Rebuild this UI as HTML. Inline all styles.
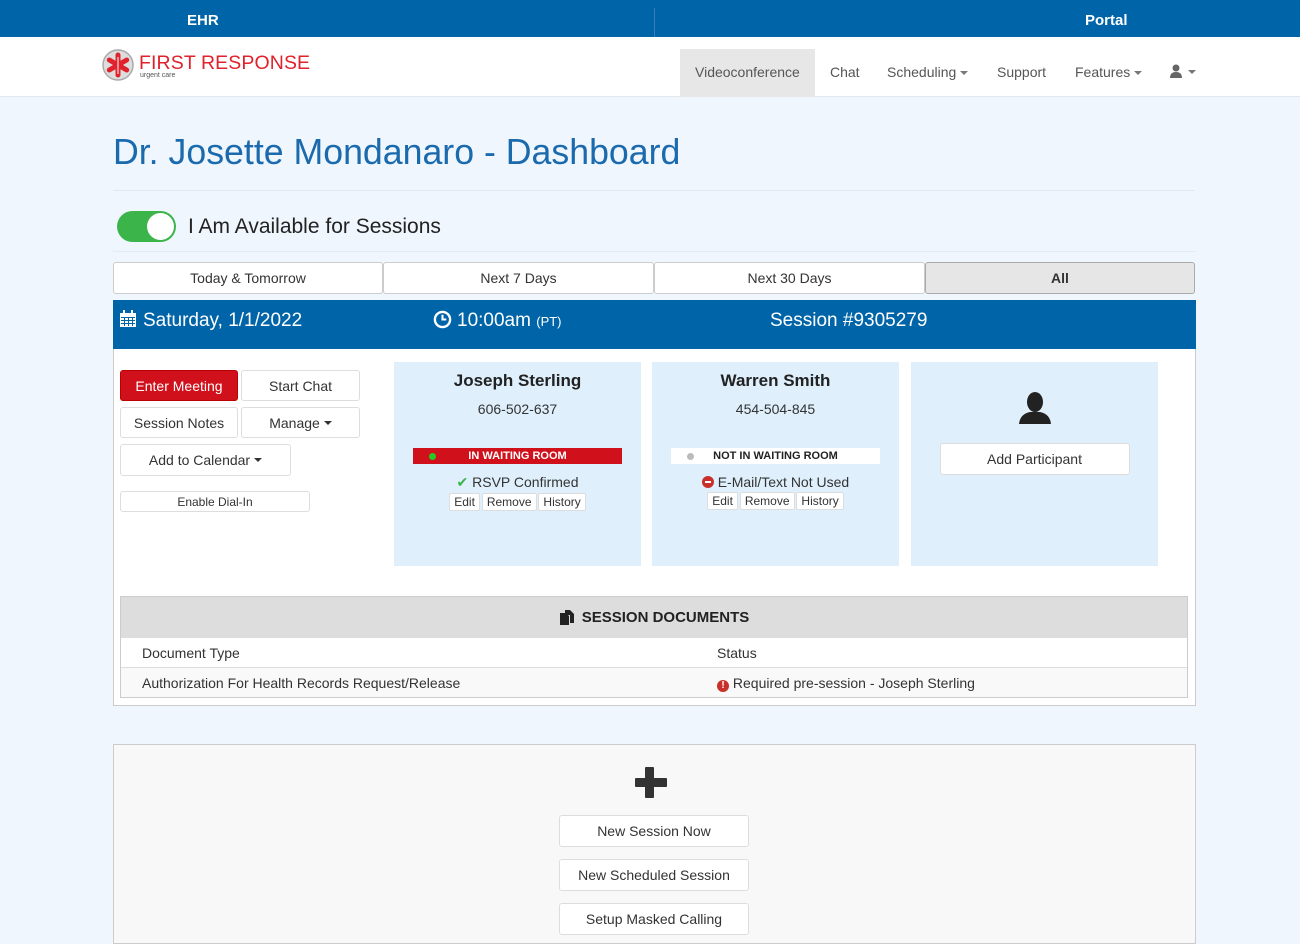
<!DOCTYPE html>
<html><head><meta charset="utf-8"><style>
*{box-sizing:border-box;margin:0;padding:0}
body{width:1300px;height:930px;overflow:hidden;background:#eff6fd;font-family:"Liberation Sans",sans-serif;color:#333;position:relative;font-size:14px}
.a{position:absolute}
.btn{position:absolute;background:#fff;border:1px solid #ddd;border-radius:3px;text-align:center;color:#333}
.c{display:flex;align-items:center;justify-content:center}
.car{display:inline-block;border-left:4px solid transparent;border-right:4px solid transparent;border-top:4px solid #333;vertical-align:middle;margin-left:4px}
.card{position:absolute;background:#dff0fc;top:362px;width:247px;height:204px;text-align:center}
.sm{display:inline-block;background:#fff;border:1px solid #ddd;border-radius:2px;padding:1px 4px;font-size:12px;margin:0 -1px}
</style></head><body>
<div class="a" style="left:0;top:0;width:1300px;height:37px;background:#0064a8"></div>
<div class="a" style="left:654px;top:8px;width:1px;height:29px;background:#3a7fb8"></div>
<div class="a" style="left:187px;top:12px;color:#fff;font-weight:bold;font-size:15px">EHR</div>
<div class="a" style="left:1085px;top:12px;color:#fff;font-weight:bold;font-size:15px">Portal</div>
<div class="a" style="left:0;top:37px;width:1300px;height:60px;background:#fff;border-bottom:1px solid #e3e8ee"></div>
<svg class="a" style="left:102px;top:49px" width="32" height="32" viewBox="0 0 32 32"><circle cx="16" cy="16" r="15" fill="#ddd" stroke="#aaa" stroke-width="1.5"/><g stroke="#e0222c" stroke-width="5" stroke-linecap="round"><line x1="16" y1="6" x2="16" y2="26"/><line x1="7.3" y1="11" x2="24.7" y2="21"/><line x1="7.3" y1="21" x2="24.7" y2="11"/></g><line x1="16" y1="8" x2="16" y2="25" stroke="#fff" stroke-width="1"/></svg>
<div class="a" style="left:139px;top:52px;color:#e0222c;font-size:19.5px;letter-spacing:0.1px">FIRST RESPONSE</div>
<div class="a" style="left:140px;top:72px;color:#555;font-size:7px">urgent care</div>
<div class="a" style="left:680px;top:49px;width:135px;height:48px;background:#e7e7e7"></div>
<div class="a" style="left:695px;top:64px;color:#555">Videoconference</div>
<div class="a" style="left:830px;top:64px;color:#555">Chat</div>
<div class="a" style="left:887px;top:64px;color:#555">Scheduling<span class="car" style="border-top-color:#777"></span></div>
<div class="a" style="left:997px;top:64px;color:#555">Support</div>
<div class="a" style="left:1075px;top:64px;color:#555">Features<span class="car" style="border-top-color:#777"></span></div>
<svg class="a" style="left:1169px;top:64px" width="14" height="14" viewBox="0 0 14 14"><circle cx="7" cy="4" r="3.5" fill="#666"/><path d="M1 14 Q1 8 7 8 Q13 8 13 14Z" fill="#666"/></svg>
<span class="a car" style="left:1184px;top:70px;border-top-color:#777"></span>
<div class="a" style="left:113px;top:132px;color:#1a6aad;font-size:35.7px">Dr. Josette Mondanaro - Dashboard</div>
<div class="a" style="left:113px;top:190px;width:1082px;height:1px;background:#e1e8ef"></div>
<div class="a" style="left:117px;top:211px;width:59px;height:31px;border-radius:16px;background:#3bb54a"></div>
<div class="a" style="left:147px;top:213px;width:27px;height:27px;border-radius:50%;background:#fff"></div>
<div class="a" style="left:188px;top:215px;font-size:21px;color:#222">I Am Available for Sessions</div>
<div class="a" style="left:113px;top:251px;width:1082px;height:1px;background:#e6ebf0"></div>
<div class="btn c" style="left:113px;top:262px;width:270px;height:32px;border-color:#ccc">Today &amp; Tomorrow</div>
<div class="btn c" style="left:383px;top:262px;width:271px;height:32px;border-color:#ccc">Next 7 Days</div>
<div class="btn c" style="left:654px;top:262px;width:271px;height:32px;border-color:#ccc">Next 30 Days</div>
<div class="btn c" style="left:925px;top:262px;width:270px;height:32px;border-color:#aaa;background:#e6e6e6;font-weight:bold">All</div>
<div class="a" style="left:113px;top:300px;width:1083px;height:406px;background:#fff;border:1px solid #ccc"></div>
<div class="a" style="left:113px;top:300px;width:1083px;height:49px;background:#0064a8"></div>
<svg class="a" style="left:119px;top:310px" width="18" height="18" viewBox="0 0 18 18"><rect x="1" y="3" width="16" height="14" fill="#fff"/><rect x="4" y="0" width="2" height="4" fill="#fff"/><rect x="12" y="0" width="2" height="4" fill="#fff"/><g fill="#0064a8"><rect x="2" y="7" width="14" height="1"/><rect x="2" y="10" width="14" height="1"/><rect x="2" y="13" width="14" height="1"/><rect x="5" y="7" width="1" height="9"/><rect x="9" y="7" width="1" height="9"/><rect x="13" y="7" width="1" height="9"/></g></svg>
<div class="a" style="left:143px;top:310px;color:#fff;font-size:19px">Saturday, 1/1/2022</div>
<svg class="a" style="left:433px;top:310px" width="19" height="19" viewBox="0 0 20 20"><circle cx="10" cy="10" r="8" fill="none" stroke="#fff" stroke-width="2.5"/><path d="M10 5v5h4" fill="none" stroke="#fff" stroke-width="2.2"/></svg>
<div class="a" style="left:457px;top:310px;color:#fff;font-size:19px">10:00am <span style="font-size:13px">(PT)</span></div>
<div class="a" style="left:770px;top:310px;color:#fff;font-size:19px">Session #9305279</div>
<div class="btn c" style="left:120px;top:370px;width:118px;height:31px;background:#d0111b;border-color:#b00;color:#fff">Enter Meeting</div>
<div class="btn c" style="left:241px;top:370px;width:119px;height:31px">Start Chat</div>
<div class="btn c" style="left:120px;top:407px;width:118px;height:31px">Session Notes</div>
<div class="btn c" style="left:241px;top:407px;width:119px;height:31px">Manage<span class="car"></span></div>
<div class="btn c" style="left:120px;top:444px;width:171px;height:32px">Add to Calendar<span class="car"></span></div>
<div class="btn c" style="left:120px;top:491px;width:190px;height:21px;font-size:12px">Enable Dial-In</div>
<div class="card" style="left:394px">
<div style="margin-top:9px;font-weight:bold;font-size:17px;color:#222">Joseph Sterling</div>
<div style="margin-top:10px">606-502-637</div>
<div style="position:relative;margin:31px auto 0;width:209px;height:16px;background:#d0111b;color:#fff;font-size:11px;font-weight:bold;line-height:16px">IN WAITING ROOM<span style="position:absolute;left:16px;top:5px;width:7px;height:7px;border-radius:50%;background:#2c2"></span></div>
<div style="margin-top:10px"><span style="color:#3bb54a">✔</span> RSVP Confirmed</div>
<div style="margin-top:2px"><span class="sm">Edit</span> <span class="sm">Remove</span> <span class="sm">History</span></div>
</div>
<div class="card" style="left:652px">
<div style="margin-top:9px;font-weight:bold;font-size:17px;color:#222">Warren Smith</div>
<div style="margin-top:10px">454-504-845</div>
<div style="position:relative;margin:31px auto 0;width:209px;height:16px;background:#fff;color:#222;font-size:11px;font-weight:bold;line-height:16px">NOT IN WAITING ROOM<span style="position:absolute;left:16px;top:5px;width:7px;height:7px;border-radius:50%;background:#bbb"></span></div>
<div style="margin-top:10px"><span style="display:inline-block;width:12px;height:12px;border-radius:50%;background:#c9302c;position:relative;vertical-align:-1px"><span style="position:absolute;left:3px;top:5px;width:6px;height:2px;background:#fff"></span></span> E-Mail/Text Not Used</div>
<div style="margin-top:2px"><span class="sm">Edit</span> <span class="sm">Remove</span> <span class="sm">History</span></div>
</div>
<div class="card" style="left:911px">
<svg style="margin-top:28px" width="36" height="36" viewBox="0 0 36 36"><ellipse cx="18" cy="12" rx="8" ry="10" fill="#222"/><path d="M2 34 Q3 24 13 22 L23 22 Q33 24 34 34Z" fill="#222"/></svg>
<div class="btn c" style="position:relative;margin:14px auto 0;width:190px;height:32px;top:0;left:0">Add Participant</div>
</div>
<div class="a" style="left:120px;top:596px;width:1068px;height:102px;border:1px solid #ccc"></div>
<div class="a c" style="left:121px;top:597px;width:1066px;height:41px;background:#ddd;font-weight:bold;font-size:15px;color:#222"><svg width="16" height="16" viewBox="0 0 16 16" style="margin-right:7px"><path d="M1 3h6l3 3v9H1z" fill="#222"/><path d="M6 0h5l4 4v9h-4V5H6z" fill="#222"/></svg>SESSION DOCUMENTS</div>
<div class="a" style="left:121px;top:638px;width:1066px;height:30px;background:#fff;border-bottom:1px solid #ddd"></div>
<div class="a" style="left:142px;top:645px">Document Type</div>
<div class="a" style="left:717px;top:645px">Status</div>
<div class="a" style="left:121px;top:668px;width:1066px;height:29px;background:#f9f9f9"></div>
<div class="a" style="left:142px;top:675px">Authorization For Health Records Request/Release</div>
<div class="a" style="left:717px;top:675px"><span style="display:inline-block;width:12px;height:12px;border-radius:50%;background:#c9302c;color:#fff;font-size:10px;font-weight:bold;text-align:center;line-height:12px;vertical-align:0">!</span> Required pre-session - Joseph Sterling</div>
<div class="a" style="left:113px;top:744px;width:1083px;height:200px;background:#f8f8f8;border:1px solid #ccc"></div>
<div class="a" style="left:645px;top:767px;width:9px;height:31px;background:#333;border-radius:1px"></div>
<div class="a" style="left:635px;top:778px;width:32px;height:9px;background:#333;border-radius:1px"></div>
<div class="btn c" style="left:559px;top:815px;width:190px;height:32px">New Session Now</div>
<div class="btn c" style="left:559px;top:859px;width:190px;height:32px">New Scheduled Session</div>
<div class="btn c" style="left:559px;top:903px;width:190px;height:32px">Setup Masked Calling</div>
</body></html>
